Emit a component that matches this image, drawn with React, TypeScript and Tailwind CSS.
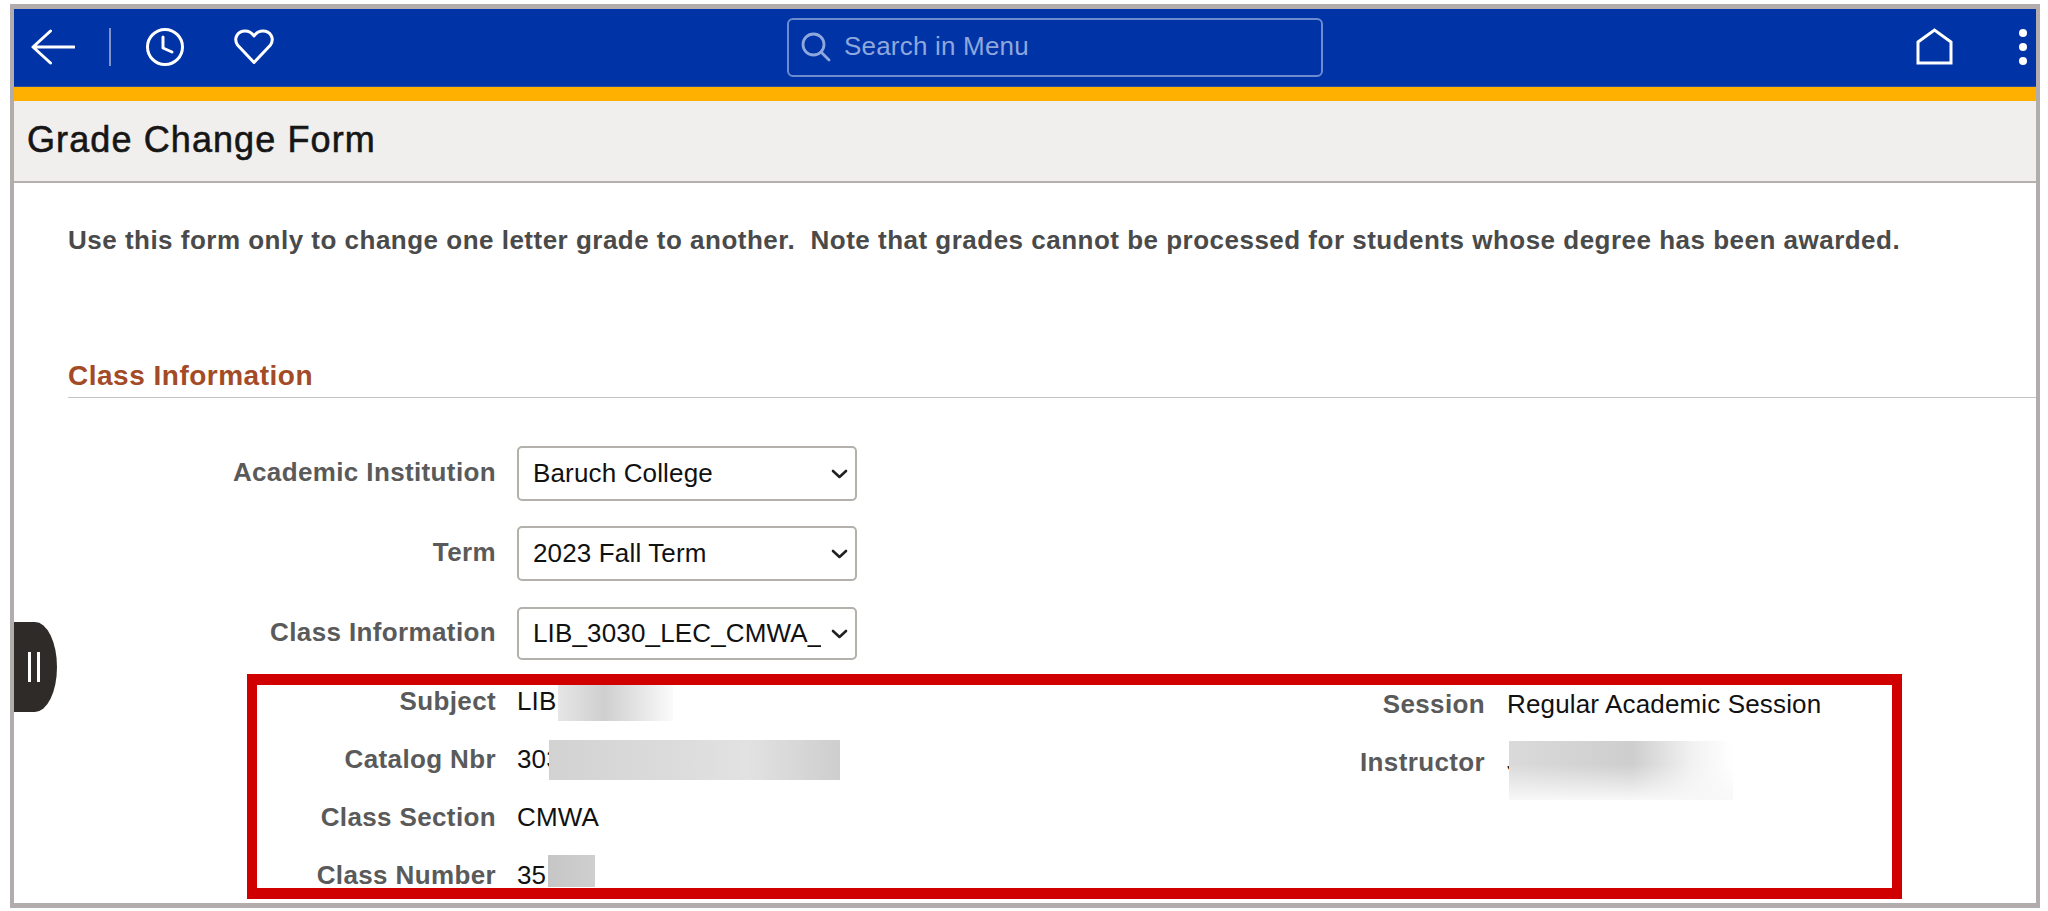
import React from "react";

const labelCls = "pb-[3px] text-right font-bold text-[26px] leading-[30px] tracking-[0.37px] text-[#5a5a5a]";
const valueCls = "text-[26px] leading-[30px] tracking-[0.15px] text-[#111]";
const selectCls = "h-full w-full appearance-none rounded-[5px] border-2 border-[#b4b0ac] bg-white pl-[14px] pr-[34px] text-[26px] tracking-[0.15px] text-[#111] outline-none";

function Sel({ value, h }: { value: string; h: string }) {
  return (
    <div className={h + " relative w-[340px]"}>
      <select className={selectCls} defaultValue={value} style={{ fontFamily: "inherit" }}>
        <option>{value}</option>
      </select>
      <svg className="pointer-events-none absolute right-[9px] top-1/2 -translate-y-1/2" width="17" height="10" viewBox="0 0 17 10" fill="none" stroke="#222" strokeWidth="2.600" strokeLinecap="round" strokeLinejoin="round">
        <path d="M2 2 L8.500 8 L15 2" />
      </svg>
    </div>
  );
}

function Patch({ cls }: { cls: string }) {
  return <div className={"absolute " + cls} />;
}

export default function App() {
  return (
    <div className="relative h-[911px] w-[2048px] overflow-hidden bg-white pl-[10px] pr-[8px] pt-[4px] pb-[3px] font-['Liberation_Sans',Arial,sans-serif]">
      <div className="flex h-full flex-col overflow-hidden border-x-[4px] border-b-[5px] border-t-[5px] border-[#b2acac] bg-white">
        <header className="flex h-[78px] shrink-0 items-center border-b border-[#2f4f9a] bg-[#0033a6] pb-[2px]">
          <div className="flex w-[95px] shrink-0 justify-start pl-[17px]">
            <svg width="44" height="36" viewBox="0 0 44 36" fill="none" stroke="white" strokeWidth="3" strokeLinecap="round" strokeLinejoin="round">
              <path d="M19.500 2 L2 18 L19.500 34 M2 18 H43" />
            </svg>
          </div>
          <div className="h-[38px] w-[2px] bg-[#7f93c8]" />
          <svg className="ml-[34px]" width="40" height="40" viewBox="0 0 40 40" fill="none" stroke="white" strokeWidth="3" strokeLinecap="round" strokeLinejoin="round">
            <circle cx="20" cy="20" r="17.500" />
            <path d="M18 10 V21 L27 25" />
          </svg>
          <svg className="ml-[49px]" width="40" height="36" viewBox="0 0 40 36" fill="none" stroke="white" strokeWidth="3" strokeLinejoin="round">
            <path d="M20 33.500 L3.500 16 C-1 9 4 2 11 2 C15 2 18 4 20 7 C22 4 25 2 29 2 C36 2 41 9 36.500 16 Z" />
          </svg>
          <div className="ml-[513px] mt-[2px] flex h-[59px] w-[536px] shrink-0 items-center rounded-[6px] border-2 border-[#6d8bd0] pb-[2px] pl-[12px]">
            <svg width="30" height="30" viewBox="0 0 30 30" fill="none" stroke="#8ea7dc" strokeWidth="2.800" strokeLinecap="round">
              <circle cx="12.500" cy="12.500" r="10.500" />
              <path d="M20 20 L28 28" />
            </svg>
            <span className="ml-[13px] text-[26px] tracking-[0.2px] text-[#8ea7dc]">Search in Menu</span>
          </div>
          <div className="flex-1" />
          <svg width="37" height="37" viewBox="0 0 37 37" fill="none" stroke="white" strokeWidth="3" strokeLinejoin="miter">
            <path d="M2 14 L18.500 2 L35 14 V35 H2 Z" />
          </svg>
          <div className="ml-[66px] mr-[9px] flex flex-col gap-[6px]">
            <div className="h-[8px] w-[8px] rounded-full bg-white" />
            <div className="h-[8px] w-[8px] rounded-full bg-white" />
            <div className="h-[8px] w-[8px] rounded-full bg-white" />
          </div>
        </header>
        <div className="h-[14px] shrink-0 bg-[#ffb000]" />
        <div className="flex h-[82px] shrink-0 items-center border-b-2 border-[#b4b0ac] bg-[#f1efed] pb-[2px] pl-[13px]">
          <h1 className="text-[36px] font-medium tracking-[1.1px] text-[#161616]" style={{ WebkitTextStroke: "0.6px #161616" }}>Grade Change Form</h1>
        </div>
        <main className="pl-[54px]">
          <p className="mt-[42px] whitespace-nowrap text-[26px] font-bold leading-[30px] tracking-[0.49px] text-[#4a4a4a]">
            Use this form only to change one letter grade to another.&nbsp; Note that grades cannot be processed for students whose degree has been awarded.
          </p>
          <h2 className="mt-[106px] border-b border-[#c4c4c4] pb-[6px] text-[28px] font-bold leading-[30px] tracking-[0.5px] text-[#a34a26]">Class Information</h2>
          <div className="mt-[48px] grid grid-cols-[428px_1fr] items-center gap-x-[21px]">
            <div className={labelCls}>Academic Institution</div>
            <Sel value="Baruch College" h="h-[55px]" />
            <div className={labelCls + " mt-[25px]"}>Term</div>
            <div className="mt-[25px]"><Sel value="2023 Fall Term" h="h-[55px]" /></div>
            <div className={labelCls + " mt-[26px]"}>Class Information</div>
            <div className="mt-[26px]"><Sel value="LIB_3030_LEC_CMWA_" h="h-[53px]" /></div>
          </div>
          <div className="mt-[26px] flex">
            <div className="grid w-[1000px] grid-cols-[428px_1fr] gap-x-[21px] gap-y-[25px]">
              <div className={labelCls}>Subject</div>
              <div className={"relative " + valueCls}>LIB<Patch cls="left-[41px] top-[-2px] h-[37px] w-[115px] bg-[linear-gradient(90deg,#e6e6e6,#cfcfcf_40%,#e4e4e4_70%,#fbfbfb)]" /></div>
              <div className={labelCls}>Catalog Nbr</div>
              <div className={"relative " + valueCls}>303<Patch cls="left-[32px] top-[-4px] h-[40px] w-[291px] bg-[linear-gradient(90deg,#d2d2d2,#dcdcdc_45%,#e2e2e2_68%,#cecece)]" /></div>
              <div className={labelCls}>Class Section</div>
              <div className={valueCls}>CMWA</div>
              <div className={labelCls}>Class Number</div>
              <div className={"relative " + valueCls}>35<Patch cls="left-[31px] top-[-5px] h-[32px] w-[47px] bg-[linear-gradient(90deg,#c6c6c6,#cfcfcf)]" /></div>
            </div>
            <div className="grid h-fit grid-cols-[417px_1fr] gap-x-[22px] gap-y-[25px] pt-[3px]">
              <div className={labelCls}>Session</div>
              <div className={valueCls}>Regular Academic Session</div>
              <div className={labelCls}>Instructor</div>
              <div className={"relative " + valueCls}>J<Patch cls="left-[2px] top-[-6px] h-[59px] w-[224px] bg-[linear-gradient(180deg,#ffffff00_40%,#f8f8f8),linear-gradient(90deg,#dadada,#cecece_55%,#f2f2f2_82%,#ffffff)]" /></div>
            </div>
          </div>
        </main>
      </div>
      {/* overlays */}
      <div className="absolute left-[14px] top-[622px] flex h-[90px] w-[43px] items-center justify-center rounded-r-[22px_45px] bg-[#2f2b28]">
        <div className="mr-[3px] flex gap-[6px]">
          <div className="h-[30px] w-[3px] bg-white" />
          <div className="h-[30px] w-[3px] bg-white" />
        </div>
      </div>
      <div className="absolute left-[247px] top-[674px] h-[225px] w-[1655px] border-x-[10px] border-y-[11px] border-[#d00000]" />
    </div>
  );
}
